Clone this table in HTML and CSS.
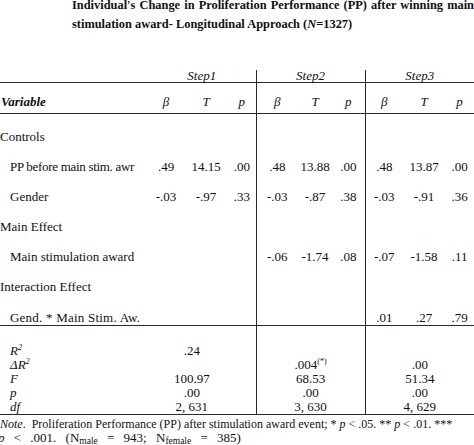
FILE: index.html
```html
<!DOCTYPE html>
<html>
<head>
<meta charset="utf-8">
<link rel="stylesheet" href="styles.css">
</head>
<body>
<div class="page">
  <div class="title">Individual's Change in Proliferation Performance (PP) after winning main stimulation award- Longitudinal Approach (<i>N</i>=1327)</div>
  <table class="tbl">
    <colgroup>
      <col class="c-label"><col class="c1b"><col class="c1t"><col class="c1p">
      <col class="c2b"><col class="c2t"><col class="c2p">
      <col class="c3b"><col class="c3t"><col class="c3p">
    </colgroup>
    <tr class="steps">
      <td></td>
      <td colspan="3" class="it">Step1</td>
      <td colspan="3" class="it vl">Step2</td>
      <td colspan="3" class="it vl">Step3</td>
    </tr>
    <tr class="head">
      <td class="var">Variable</td>
      <td class="it">β</td><td class="it">T</td><td class="it">p</td>
      <td class="it vl">β</td><td class="it">T</td><td class="it">p</td>
      <td class="it vl">β</td><td class="it">T</td><td class="it">p</td>
    </tr>
    <tr class="row">
      <td class="sec">Controls</td>
      <td></td><td></td><td></td>
      <td class="vl"></td><td></td><td></td>
      <td class="vl"></td><td></td><td></td>
    </tr>
    <tr class="row">
      <td class="sub tight">PP before main stim. awr</td>
      <td>.49</td><td>14.15</td><td>.00</td>
      <td class="vl">.48</td><td>13.88</td><td>.00</td>
      <td class="vl">.48</td><td>13.87</td><td>.00</td>
    </tr>
    <tr class="row">
      <td class="sub">Gender</td>
      <td>-.03</td><td>-.97</td><td>.33</td>
      <td class="vl">-.03</td><td>-.87</td><td>.38</td>
      <td class="vl">-.03</td><td>-.91</td><td>.36</td>
    </tr>
    <tr class="row">
      <td class="sec">Main Effect</td>
      <td></td><td></td><td></td>
      <td class="vl"></td><td></td><td></td>
      <td class="vl"></td><td></td><td></td>
    </tr>
    <tr class="row">
      <td class="sub">Main stimulation award</td>
      <td></td><td></td><td></td>
      <td class="vl">-.06</td><td>-1.74</td><td>.08</td>
      <td class="vl">-.07</td><td>-1.58</td><td>.11</td>
    </tr>
    <tr class="row">
      <td class="sec">Interaction Effect</td>
      <td></td><td></td><td></td>
      <td class="vl"></td><td></td><td></td>
      <td class="vl"></td><td></td><td></td>
    </tr>
    <tr class="row last">
      <td class="sub loose">Gend. * Main Stim. Aw.</td>
      <td></td><td></td><td></td>
      <td class="vl"></td><td></td><td></td>
      <td class="vl">.01</td><td>.27</td><td>.79</td>
    </tr>
    <tr class="spacer">
      <td></td><td colspan="3"></td><td colspan="3" class="vl"></td><td colspan="3" class="vl"></td>
    </tr>
    <tr class="stat">
      <td class="sub it">R<sup>2</sup></td>
      <td colspan="3" class="s1">.24</td>
      <td colspan="3" class="vl"></td>
      <td colspan="3" class="vl"></td>
    </tr>
    <tr class="stat">
      <td class="sub it">ΔR<sup>2</sup></td>
      <td colspan="3" class="s1"></td>
      <td colspan="3" class="vl">.004<sup>(*)</sup></td>
      <td colspan="3" class="vl">.00</td>
    </tr>
    <tr class="stat">
      <td class="sub it">F</td>
      <td colspan="3" class="s1">100.97</td>
      <td colspan="3" class="vl">68.53</td>
      <td colspan="3" class="vl">51.34</td>
    </tr>
    <tr class="stat">
      <td class="sub it">p</td>
      <td colspan="3" class="s1">.00</td>
      <td colspan="3" class="vl">.00</td>
      <td colspan="3" class="vl">.00</td>
    </tr>
    <tr class="stat last">
      <td class="sub it">df</td>
      <td colspan="3" class="s1">2, 631</td>
      <td colspan="3" class="vl">3, 630</td>
      <td colspan="3" class="vl">4, 629</td>
    </tr>
  </table>
  <div class="note">
    <div class="note-l1"><i>Note</i>.&nbsp; Proliferation Performance (PP) after stimulation award event; * <i>p</i> &lt; .05. ** <i>p</i> &lt; .01. ***</div>
    <div class="note-l2"><i>p</i> &lt; .001. (N<sub>male</sub> = 943; N<sub>female</sub> = 385)</div>
  </div>
</div>
</body>
</html>
```
FILE: styles.css
```css
html, body {
  margin: 0;
  padding: 0;
  background: #fff;
}
body, .page, .tbl, .tbl td, .note, .title {
  font-family: "Liberation Serif", serif;
}
body {
  color: #111;
}
.page {
  width: 474px;
  height: 445px;
  overflow: hidden;
}
.title {
  margin: -4px 0 0 72px;
  font-weight: bold;
  font-size: 12.4px;
  line-height: 19px;
  text-align: justify;
  text-align-last: left;
}
.tbl {
  margin-top: 36px;
  width: 474px;
  border-collapse: collapse;
  table-layout: fixed;
  font-size: 13px;
}
.tbl td {
  padding: 0;
  text-align: center;
  white-space: nowrap;
  overflow: visible;
}
.c-label { width: 148px; }
.c1b { width: 36px; }
.c1t { width: 44px; }
.c1p { width: 28px; }
.c2b { width: 42px; }
.c2t { width: 34px; }
.c2p { width: 33px; }
.c3b { width: 38px; }
.c3t { width: 42px; }
.c3p { width: 29px; }
.vl { border-left: 1.3px solid #2a2a2a; }
.it { font-style: italic; }
.steps td {
  height: 12px;
  line-height: 12px;
  vertical-align: top;
  border-bottom: 1.2px solid #2a2a2a;
}
.head td {
  height: 26px;
  line-height: 14px;
  vertical-align: bottom;
  padding-bottom: 4px;
  border-bottom: 1.2px solid #2a2a2a;
}
.head .var {
  text-align: left;
  font-weight: bold;
  font-style: italic;
  padding-left: 1px;
}
.row td {
  height: 30px;
  line-height: 14px;
  vertical-align: bottom;
}
.row.last td { border-bottom: 1.2px solid #2a2a2a; height: 31px; }
.sec { text-align: left !important; }
.sub { text-align: left !important; padding-left: 10px !important; }
.tight { letter-spacing: -0.3px; }
.loose { letter-spacing: 0.22px; }
.spacer td { height: 18px; }
.stat td {
  height: 14px;
  line-height: 14px;
  vertical-align: middle;
}
.stat.last td { border-bottom: 1.2px solid #2a2a2a; }
.s1 { padding-right: 20px !important; }
sup {
  font-size: 8px;
  line-height: 0;
  vertical-align: 5px;
}
sub {
  font-size: 9.5px;
  line-height: 0;
  vertical-align: -2px;
}
.note {
  margin-top: 2px;
  line-height: 14px;
  white-space: nowrap;
}
.note-l1 {
  font-size: 12px;
}
.note-l2 {
  font-size: 13px;
  word-spacing: 6px;
  margin-left: -2px;
}
```
